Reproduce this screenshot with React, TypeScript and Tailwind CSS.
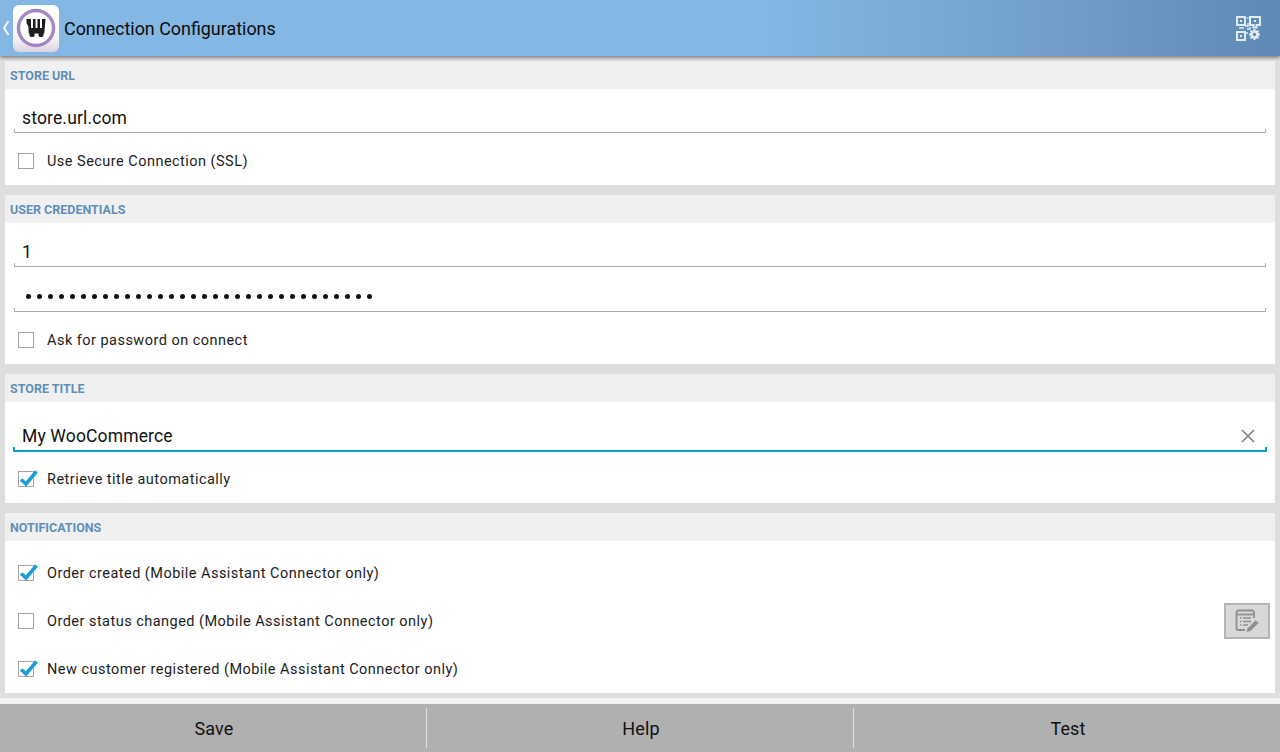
function Check({ on }: { on?: boolean }) {
  return (
    <span className="relative block w-[16px] h-[16px] border border-[#a4a4a4] bg-white shrink-0">
      {on && (
        <svg className="absolute left-[-2px] top-[-5px]" width="22" height="22" viewBox="0 0 22 22">
          <path d="M4 12.500 L9 17 L19.500 4.500" fill="none" stroke="#1a9fd4" strokeWidth="3.600" />
        </svg>
      )}
    </span>
  );
}
function CheckRow({ label, on }: { label: string; on?: boolean }) {
  return (
    <div className="flex items-center h-[48px] pl-[13px] gap-[13px] text-[14.5px] tracking-[0.47px] text-[#1c1c1c]">
      <Check on={on} />
      <span className="pt-[2px]">{label}</span>
    </div>
  );
}
function Underline({ active }: { active?: boolean }) {
  return (
    <div
      className={active ? "mx-[8px] h-[5px] border-x-2 border-b-2 border-[#0f9ccf]" : "mx-[9px] h-[4px] border-x border-b border-[#ababab]"}
    />
  );
}
function Field({ children, h, active, right }: { children: React.ReactNode; h: string; active?: boolean; right?: React.ReactNode }) {
  return (
    <div className={`flex flex-col justify-end ${h}`}>
      <div className="flex items-center justify-between pl-[17px] pr-[19px] text-[17.5px] tracking-[0.15px] leading-[22px] text-[#111]">
        <span>{children}</span>
        {right}
      </div>
      <Underline active={active} />
    </div>
  );
}
function Section({ title, children }: { title: string; children: React.ReactNode }) {
  return (
    <section className="bg-white">
      <div className="h-[28px] bg-[#f0f0f0] flex items-center pl-[5px] pt-[2px] text-[12.5px] font-bold text-[#5f8fba]">{title}</div>
      {children}
    </section>
  );
}
export default function App() {
  return (
    <div className="w-[1280px] h-[752px] overflow-hidden flex flex-col bg-[#dedede]" style={{ fontFamily: "Roboto, sans-serif" }}>
      <header className="relative h-[56px] shrink-0 flex items-center bg-[linear-gradient(90deg,#84b7e4_0%,#84b7e4_60%,#6f9cc7_85%,#5c8ab4_100%)] shadow-[0_2px_3px_rgba(0,0,0,0.4)] z-10">
        <svg className="ml-[2px]" width="8" height="18" viewBox="0 0 8 18">
          <path d="M6.500 2 L2 9 L6.500 16" fill="none" stroke="#f2f7fc" strokeWidth="2" />
        </svg>
        <div className="ml-[3px] w-[46px] h-[47px] rounded-[6px] bg-[linear-gradient(180deg,#ffffff_0%,#f6f4f8_70%,#d9d4de_100%)] flex items-center justify-center">
          <svg width="42" height="42" viewBox="0 0 42 42">
            <circle cx="21" cy="21" r="17.500" fill="#fff" stroke="#a585c6" strokeWidth="3.400" />
            <path d="M11.500 12 h4.500 v9 h2 v-9 h2.500 v9 h2 v-9 h2.500 v9 h2 v-9 h3.500 l-1.200 14.500 h-15.500 l-0.500-7 l-1.800-3.500 z" fill="#1e1e1e" />
            <circle cx="17" cy="27.500" r="2.600" fill="#1e1e1e" />
            <circle cx="26" cy="27.500" r="2.600" fill="#1e1e1e" />
          </svg>
        </div>
        <h1 className="ml-[5px] pt-[2px] text-[17.9px] font-normal text-[#0c0c0c]">Connection Configurations</h1>
        <svg className="ml-auto mr-[19px]" width="26" height="26" viewBox="0 0 26 26" fill="none" stroke="#e1eaf3" strokeWidth="2">
          <rect x="2" y="2" width="8" height="8" />
          <path d="M15 2h10v8h-3.500v2.500h-3V10H15z" />
          <rect x="2" y="17" width="8" height="8" />
          <path d="M12 3h1.500M13 8v3h-3M4 13h5M12 14h3v-2M12 17v2" strokeWidth="1.500" />
          <rect x="5" y="5" width="2" height="2" fill="#e1eaf3" stroke="none" />
          <rect x="19" y="5" width="2" height="2" fill="#e1eaf3" stroke="none" />
          <rect x="5" y="20" width="2" height="2" fill="#e1eaf3" stroke="none" />
          <circle cx="19.500" cy="19.500" r="3" strokeWidth="2.600" />
          <path d="M19.500 14v2.500M19.500 22.500v2.500M14 19.500h2.500M22.500 19.500h2.500M15.600 15.600l1.700 1.700M21.700 21.700l1.700 1.700M15.600 23.400l1.700-1.700M21.700 17.300l1.700-1.700" strokeWidth="2" />
        </svg>
      </header>

      <main className="flex-1 flex flex-col gap-[10px] px-[5px] pt-[5px]">
        <Section title="STORE URL">
          <Field h="h-[44px]">store.url.com</Field>
          <div className="h-[4px]" />
          <CheckRow label="Use Secure Connection (SSL)" />
        </Section>
        <Section title="USER CREDENTIALS">
          <Field h="h-[44px]">1</Field>
          <Field h="h-[45px]">
            <span className="flex gap-[6px] items-center h-[22px] pl-[4px] pb-[1px]">
              {Array.from({ length: 32 }).map((_, i) => (
                <span key={i} className="block w-[5px] h-[5px] rounded-full bg-[#111]" />
              ))}
            </span>
          </Field>
          <div className="h-[4px]" />
          <CheckRow label="Ask for password on connect" />
        </Section>
        <Section title="STORE TITLE">
          <Field
            h="h-[50px]"
            active
            right={
              <svg width="16" height="16" viewBox="0 0 16 16">
                <path d="M2 2 L14 14 M14 2 L2 14" stroke="#808080" strokeWidth="1.600" />
              </svg>
            }
          >
            My WooCommerce
          </Field>
          <div className="h-[3px]" />
          <CheckRow label="Retrieve title automatically" on />
        </Section>
        <Section title="NOTIFICATIONS">
          <div className="h-[8px]" />
          <CheckRow label="Order created (Mobile Assistant Connector only)" on />
          <div className="relative">
            <CheckRow label="Order status changed (Mobile Assistant Connector only)" />
            <button className="absolute right-[5px] top-[6px] w-[46px] h-[36px] border-2 border-[#b4b4b4] bg-[#d8d8d8] flex items-center justify-center">
              <svg width="26" height="26" viewBox="0 0 26 26" fill="none" stroke="#8f8f8f">
                <path d="M20 10V4.500a2 2 0 0 0-2-2H4.500a2 2 0 0 0-2 2V20a2 2 0 0 0 2 2H11" strokeWidth="1.800" />
                <path d="M3 6.500h16" strokeWidth="1.800" />
                <path d="M6 10h1.500M9 10h8M6 13.500h1.500M9 13.500h8M6 17h1.500M9 17h5" strokeWidth="1.500" />
                <path d="M12.500 24l1.200-3.800 8-8 2.800 2.800-8 8z" fill="#8f8f8f" stroke="none" />
              </svg>
            </button>
          </div>
          <CheckRow label="New customer registered (Mobile Assistant Connector only)" on />
        </Section>
      </main>

      <div className="h-[6px] bg-[#f2f2f2] shrink-0" />
      <footer className="h-[48px] shrink-0 bg-[#b0b0b0] flex items-center text-[18px] tracking-[0.1px] text-[#111]">
        <div className="flex-1 h-full flex items-center justify-center pl-[2px]">Save</div>
        <div className="w-px h-[40px] bg-[#e2e2e2]" />
        <div className="flex-1 h-full flex items-center justify-center pl-[2px]">Help</div>
        <div className="w-px h-[40px] bg-[#e2e2e2]" />
        <div className="flex-1 h-full flex items-center justify-center pl-[2px]">Test</div>
      </footer>
    </div>
  );
}
